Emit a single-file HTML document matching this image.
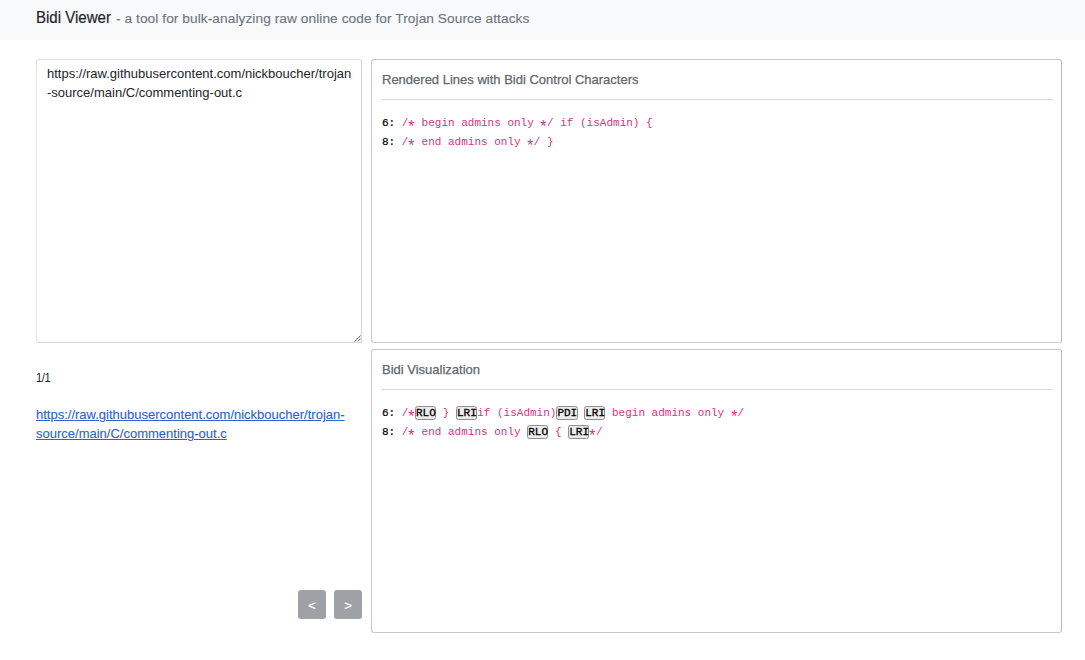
<!DOCTYPE html>
<html><head><meta charset="utf-8">
<style>
html,body{margin:0;padding:0;background:#fff;width:1085px;height:660px;overflow:hidden;position:relative;font-family:"Liberation Sans",sans-serif;color:#212529}
.hdr{position:absolute;left:0;top:0;width:1085px;height:40px;background:#f8f9fa}
.t{position:absolute;white-space:pre;line-height:19px}
.ttl{position:absolute;left:36px;top:8px;font-size:16px;color:#212529;white-space:pre;line-height:19px;transform:scaleX(0.94);transform-origin:0 0;-webkit-text-stroke:0.2px #212529}
.sub{position:absolute;left:116px;top:8.6px;font-size:13.7px;color:#6c757d;letter-spacing:0.07px;white-space:pre;line-height:19px;-webkit-text-stroke:0.12px #6c757d}
.ta{position:absolute;left:36px;top:59px;width:324px;height:282px;border:1px solid #d6d6d6;border-left-color:#e2e3e5;border-top-color:#dedede;border-radius:3px;border-bottom-right-radius:1px;box-sizing:content-box}
.panel{position:absolute;left:371px;width:689px;height:282px;border:1px solid #c9c9c9;border-right-color:#b9b9b9;border-radius:3px}
.ptitle{position:absolute;left:10px;top:10px;font-size:13px;color:#60676e;white-space:pre;line-height:19px;-webkit-text-stroke:0.25px #60676e}
.hr{position:absolute;left:10px;width:671px;top:39px;height:1px;background:#d8d8d8}
.code{position:absolute;left:10px;top:54px;font-family:"Liberation Mono",monospace;font-size:11px;line-height:19px;color:#d63384;white-space:pre}
.code i.a{font-style:normal;display:inline-block;width:6.6px;text-align:center;transform:translate(0px,3px) scale(1.45);transform-origin:50% 30%}
.code b{color:#000;font-weight:normal;-webkit-text-stroke:0.22px #000}
.k{display:inline-block;box-sizing:border-box;width:21.2px;height:13.8px;line-height:13.3px;border:1px solid #8e8e8e;border-radius:2.5px;background:#ebebeb;color:#000;-webkit-text-stroke:0.3px #000;text-align:center;vertical-align:baseline}
.link{position:absolute;left:36px;top:405px;font-size:13px;color:#2b63c6;text-decoration:underline;line-height:19px;-webkit-text-stroke:0.1px #2b63c6;white-space:pre}
.btn{position:absolute;top:590px;width:28px;height:29px;background:#9ea2a6;border-radius:3px;color:#fff;font-size:13px;text-align:center;line-height:31px;-webkit-text-stroke:0.2px #fff}
</style></head><body>
<div class="hdr"></div>
<div class="ttl">Bidi Viewer</div><div class="sub">- a tool for bulk-analyzing raw online code for Trojan Source attacks</div>

<div class="ta"><div class="t" style="left:10px;top:4px;font-size:13px;color:#212529">https://raw.githubusercontent.com/nickboucher/trojan
-source/main/C/commenting-out.c</div><svg style="position:absolute;right:0;bottom:0" width="9" height="9" viewBox="0 0 9 9"><path d="M2.6 8.6 L8.8 2.4 M5.8 8.4 L8.6 5.6" stroke="#555" stroke-width="1" fill="none"/></svg></div>

<div class="panel" style="top:59px">
  <div class="ptitle">Rendered Lines with Bidi Control Characters</div>
  <div class="hr"></div>
  <div class="code"><b>6:</b> /<i class="a">*</i> begin admins only <i class="a">*</i>/ if (isAdmin) {
<b>8:</b> /<i class="a">*</i> end admins only <i class="a">*</i>/ }</div>
</div>

<div class="panel" style="top:349px">
  <div class="ptitle">Bidi Visualization</div>
  <div class="hr"></div>
  <div class="code"><b>6:</b> /<i class="a">*</i><span class="k">RLO</span> } <span class="k">LRI</span>if (isAdmin)<span class="k">PDI</span> <span class="k">LRI</span> begin admins only <i class="a">*</i>/
<b>8:</b> /<i class="a">*</i> end admins only <span class="k">RLO</span> { <span class="k">LRI</span><i class="a">*</i>/</div>
</div>

<div class="t" style="left:36px;top:368px;font-size:13.5px;color:#212529;letter-spacing:-0.4px;transform:scaleX(0.82);transform-origin:0 0">1/1</div>
<div class="link">https://raw.githubusercontent.com/nickboucher/trojan-
source/main/C/commenting-out.c</div>

<div class="btn" style="left:298px">&lt;</div>
<div class="btn" style="left:334px">&gt;</div>
</body></html>
